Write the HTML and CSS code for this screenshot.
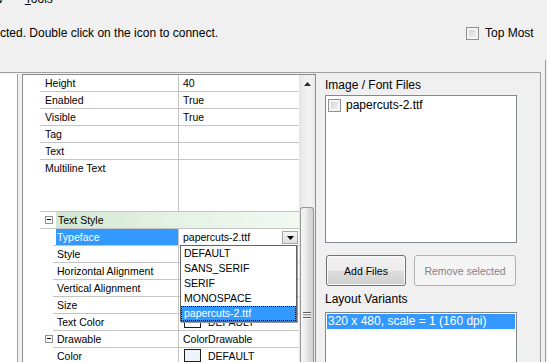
FILE: index.html
```html
<!DOCTYPE html>
<html>
<head>
<meta charset="utf-8">
<link rel="stylesheet" href="styles.css">
</head>
<body>
<div class="menubar"><div class="menu-inner"><span class="mi mi-view">View</span><span class="mi mi-tools"><u>T</u>ools</span></div></div>
<div class="toolbar">
  <div class="status">cted. Double click on the icon to connect.</div>
  <div class="topmost"><span class="cb"></span><span>Top Most</span></div>
</div>
<div class="area">
  <div class="main">
    <div class="leftpane"></div>
    <div class="grid">
      <div class="rows">
        <div class="row"><div class="ind"></div><div class="cells"><div class="name">Height</div><div class="val">40</div></div></div>
        <div class="row"><div class="ind"></div><div class="cells"><div class="name">Enabled</div><div class="val">True</div></div></div>
        <div class="row"><div class="ind"></div><div class="cells"><div class="name">Visible</div><div class="val">True</div></div></div>
        <div class="row"><div class="ind"></div><div class="cells"><div class="name">Tag</div><div class="val"></div></div></div>
        <div class="row"><div class="ind"></div><div class="cells"><div class="name">Text</div><div class="val"></div></div></div>
        <div class="row tall"><div class="ind"></div><div class="cells"><div class="name">Multiline Text</div><div class="val"></div></div></div>
        <div class="row cat"><div class="ind"></div><div class="cells"><svg class="exp" width="8" height="8" viewBox="0 0 8 8"><rect x="0.5" y="0.5" width="7" height="7" fill="#fff" stroke="#919191"/><rect x="2" y="3" width="4" height="1" fill="#000"/></svg><div class="catlabel">Text Style</div></div></div>
        <div class="row sub"><div class="ind"></div><div class="cells"><div class="name sel"><span class="selname">Typeface</span></div><div class="val"><span class="vtext">papercuts-2.ttf</span><span class="ddbtn"><svg width="7" height="4" viewBox="0 0 7 4"><path d="M0 0h7L3.5 4z" fill="#000"/></svg></span></div></div></div>
        <div class="row sub"><div class="ind"></div><div class="cells"><div class="name">Style</div><div class="val"></div></div></div>
        <div class="row sub"><div class="ind"></div><div class="cells"><div class="name">Horizontal Alignment</div><div class="val"></div></div></div>
        <div class="row sub"><div class="ind"></div><div class="cells"><div class="name">Vertical Alignment</div><div class="val"></div></div></div>
        <div class="row sub"><div class="ind"></div><div class="cells"><div class="name">Size</div><div class="val"></div></div></div>
        <div class="row sub"><div class="ind"></div><div class="cells"><div class="name">Text Color</div><div class="val sval"><span class="sw sw-white"></span><span>DEFAULT</span></div></div></div>
        <div class="row sub"><div class="ind ind-exp"><svg class="exp2" width="8" height="8" viewBox="0 0 8 8"><rect x="0.5" y="0.5" width="7" height="7" fill="#fff" stroke="#919191"/><rect x="2" y="3" width="4" height="1" fill="#000"/></svg></div><div class="cells"><div class="name">Drawable</div><div class="val">ColorDrawable</div></div></div>
        <div class="row sub"><div class="ind"></div><div class="cells"><div class="name">Color</div><div class="val sval"><span class="sw sw-blue"></span><span>DEFAULT</span></div></div></div>
      </div>
      <div class="vscroll">
        <div class="sb-up"><svg width="7" height="4" viewBox="0 0 7 4"><path d="M3.5 0L7 4H0z" fill="#2b2b2b"/></svg></div>
        <div class="sb-track"></div>
        <div class="thumb"><svg width="8" height="7" viewBox="0 0 8 7"><rect x="0" y="0" width="8" height="1" fill="#5e5e5e"/><rect x="0" y="1" width="8" height="1" fill="#fafafa"/><rect x="0" y="2.5" width="8" height="1" fill="#5e5e5e"/><rect x="0" y="3.5" width="8" height="1" fill="#fafafa"/><rect x="0" y="5" width="8" height="1" fill="#5e5e5e"/><rect x="0" y="6" width="8" height="1" fill="#fafafa"/></svg></div>
      </div>
      <div class="dropdown">
        <div class="dd-item">DEFAULT</div>
        <div class="dd-item">SANS_SERIF</div>
        <div class="dd-item">SERIF</div>
        <div class="dd-item">MONOSPACE</div>
        <div class="dd-item dd-sel">papercuts-2.ttf</div>
      </div>
    </div>
    <div class="rightpane">
      <div class="lbl">Image / Font Files</div>
      <div class="lb lb1">
        <div class="lbitem"><span class="cb"></span><span>papercuts-2.ttf</span></div>
      </div>
      <div class="btns">
        <div class="btn btn-add">Add Files</div>
        <div class="btn btn-rem">Remove selected</div>
      </div>
      <div class="lbl lbl2">Layout Variants</div>
      <div class="lb lb2">
        <div class="selitem">320 x 480, scale = 1 (160 dpi)</div>
      </div>
    </div>
  </div>
</div>
</body>
</html>
```

FILE: styles.css
```css
* { box-sizing: border-box; }
html, body { margin: 0; height: 362px; overflow: hidden; }
body {
  width: 547px;
  background: #f0f0f0;
  font-family: "Liberation Sans", Arial, sans-serif;
  color: #000;
}

.menubar { height: 6px; overflow: hidden; }
.menu-inner { display: flex; margin-top: -8px; font-size: 12px; line-height: 14px; white-space: nowrap; }
.mi-view { margin-left: -23px; }
.mi-tools { margin-left: 22px; }

.toolbar { height: 54px; display: flex; align-items: center; }
.status { width: 466px; font-size: 12px; line-height: 14px; white-space: nowrap; }
.topmost { display: flex; align-items: center; gap: 6px; font-size: 12px; line-height: 14px; }

.cb {
  display: block;
  flex: none;
  width: 13px;
  height: 13px;
  border: 1px solid #8e8f8f;
  background: linear-gradient(135deg, #c9ccd1 0%, #e6e7e9 60%, #f6f6f6 100%);
  box-shadow: inset 0 0 0 2px #f4f4f4;
}

.area {
  height: 302px;
  width: 546px;
  border-right: 1px solid #a0a0a0;
  padding-top: 12px;
  overflow: hidden;
}
.main {
  width: 541px;
  height: 300px;
  border-top: 1px solid #a0a0a0;
  border-right: 1px solid #a0a0a0;
  display: flex;
}
.leftpane {
  width: 18px;
  flex: none;
  margin-top: 1px;
  border-right: 1px solid #a0a0a0;
  background: #fff;
}

.grid {
  position: relative;
  width: 294px;
  flex: none;
  height: 300px;
  margin-left: 4px;
  margin-top: 1px;
  border: 1px solid #8c8c8c;
  background: #fff;
  display: flex;
}
.rows { width: 276px; flex: none; font-size: 10.5px; line-height: 16px; }
.row { display: flex; height: 17px; }
.row.tall { height: 52px; }
.ind { width: 17px; flex: none; }
.row.sub .ind { width: 30px; }
.ind-exp { padding: 4px 0 0 22px; }
.exp2 { display: block; }
.cells { flex: 1; display: flex; min-width: 0; border-bottom: 1px solid #c4c4c4; }
.name {
  width: 139px;
  flex: none;
  border-right: 1px solid #c4c4c4;
  padding-left: 5px;
  white-space: nowrap;
  overflow: hidden;
}
.row.sub .name { width: 126px; padding-left: 4px; }
.row.sub .name.sel { padding-left: 3px; }
.selname { display: block; height: 16px; background: #3399ff; color: #fff; padding-left: 1px; }
.val { flex: 1; display: flex; align-items: flex-start; padding-left: 4px; white-space: nowrap; min-width: 0; }
.sval { padding-left: 5px; }
.exp { display: block; flex: none; margin: 4px 3px 0 5px; }
.catlabel {
  flex: 1;
  padding-left: 2px;
  background: linear-gradient(to right, #d2e7d2 0%, #e4f1e4 45%, #f3f8f3 100%);
}
.ddbtn {
  margin-left: auto;
  margin-right: 1px;
  margin-top: 2px;
  width: 16px;
  height: 13px;
  border: 1px solid #a7a7a7;
  background: linear-gradient(#f6f6f6, #dedede);
  display: flex;
  align-items: center;
  justify-content: center;
}
.ddbtn svg { display: block; }
.sw { display: block; flex: none; width: 17px; height: 13px; margin-top: 1px; margin-right: 7px; border: 1px solid #1e1e1e; }
.sw-white { background: #fff; }
.sw-blue { background: #eef4fc; }

.vscroll {
  width: 16px;
  flex: none;
  display: flex;
  flex-direction: column;
  background: linear-gradient(to right, #e4e4e4 0%, #efefef 35%, #f2f2f2 75%, #eaeaea 100%);
}
.sb-up { height: 17px; flex: none; display: flex; align-items: center; justify-content: center; }
.sb-up svg { display: block; }
.sb-track { height: 115px; flex: none; }
.thumb {
  flex: 1;
  margin: 0 1px;
  border: 1px solid #979797;
  border-bottom: none;
  border-radius: 3px 3px 0 0;
  background: linear-gradient(to right, #f5f5f5 0%, #ececec 45%, #dedede 55%, #d3d3d3 100%);
  padding-top: 104px;
  display: flex;
  justify-content: center;
  align-items: flex-start;
}
.thumb svg { display: block; }

.dropdown {
  position: absolute;
  left: 157px;
  top: 170px;
  width: 117px;
  height: 77px;
  border: 1px solid #646464;
  background: #fff;
  box-shadow: 1px 1px 0 #9a9a9a;
  font-size: 10.5px;
  line-height: 15px;
}
.dd-item { height: 15px; padding-left: 3px; white-space: nowrap; }
.dd-sel { background: #3399ff; color: #fff; outline: 1px dotted #000; outline-offset: -1px; }

.rightpane { flex: 1; padding-left: 9px; padding-top: 5px; }
.lbl { font-size: 12px; line-height: 14px; white-space: nowrap; }
.lb { width: 192px; border: 1px solid #828790; background: #fff; font-size: 12px; }
.lb1 { margin-top: 3px; height: 148px; padding: 2px; }
.lbitem { display: flex; align-items: center; gap: 5px; line-height: 14px; }
.btns { display: flex; gap: 8px; margin-top: 12px; padding-left: 1px; }
.btn {
  height: 31px;
  border-radius: 3px;
  font-size: 10.5px;
  display: flex;
  align-items: center;
  justify-content: center;
  white-space: nowrap;
}
.btn-add {
  width: 80px;
  border: 1px solid #707070;
  background: linear-gradient(#f2f2f2 0%, #ebebeb 50%, #dddddd 51%, #cfcfcf 100%);
  box-shadow: inset 0 0 0 1px #fbfbfb;
}
.btn-rem {
  width: 102px;
  border: 1px solid #adb2b5;
  background: #f4f4f4;
  color: #838383;
}
.lbl2 { margin-top: 6px; }
.lb2 { margin-top: 6px; height: 60px; padding: 1px; }
.selitem { height: 15px; line-height: 15px; background: #3399ff; color: #fff; padding-left: 1px; white-space: nowrap; }
```
